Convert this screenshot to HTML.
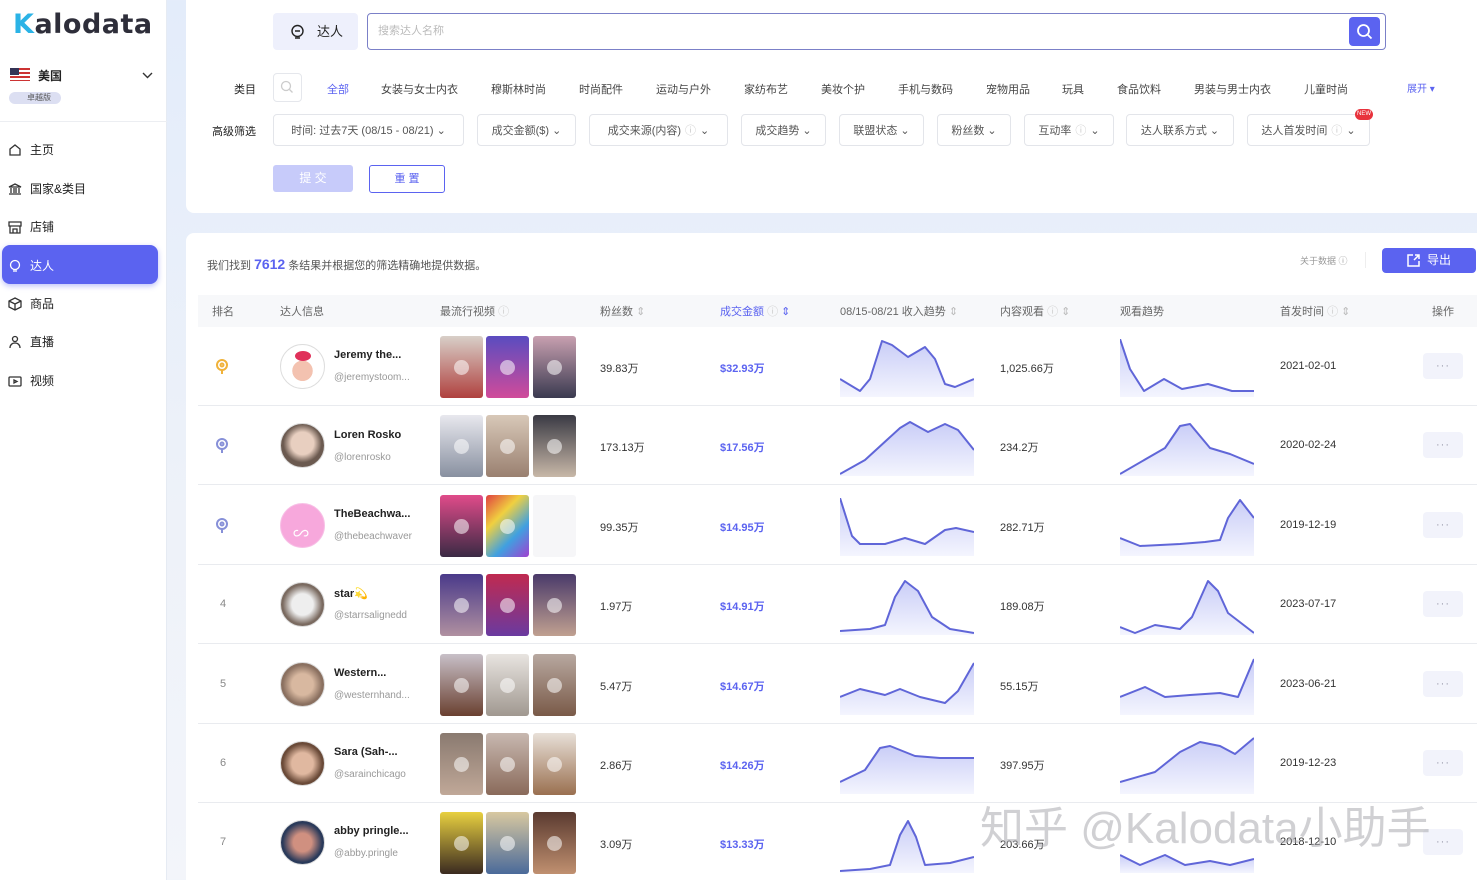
<!DOCTYPE html>
<html><head><meta charset="utf-8">
<style>
*{margin:0;padding:0;box-sizing:border-box}
html,body{width:1477px;height:880px;overflow:hidden}
body{font-family:"Liberation Sans","Noto Sans CJK SC",sans-serif;background:linear-gradient(180deg,#e3ecfa 0%,#eef2f9 60%,#f3f5fa 100%);position:relative;color:#333}
.abs{position:absolute}
.side{position:absolute;left:0;top:0;width:167px;height:880px;background:#fff;border-right:1px solid #e6ebf3}
.nav{position:absolute;left:8px;font-size:12px;color:#222;display:flex;align-items:center;gap:8px}
.nav svg{width:14px;height:14px}
.card{position:absolute;background:#fff;border-radius:8px}
.t{position:absolute;font-size:11px;color:#444;white-space:nowrap}
.dd{position:absolute;top:114px;height:32px;border:1px solid #e3e5ea;border-radius:4px;font-size:11px;color:#555;display:flex;align-items:center;justify-content:center;gap:4px;white-space:nowrap}
.hd{position:absolute;top:303px;font-size:11px;color:#666;white-space:nowrap}
.row{position:absolute;left:198px;width:1279px;height:79px;border-bottom:1px solid #e9ebef}
.c{position:absolute;font-size:11px;color:#333;white-space:nowrap}
.th{position:absolute;width:43px;height:62px;border-radius:3px}
.play{position:absolute;left:14px;top:24px;width:15px;height:15px;border-radius:50%;background:rgba(255,255,255,.55)}
.av{position:absolute;left:82px;width:45px;height:45px;border-radius:50%;border:1px solid #ddd}
.op{position:absolute;left:1225px;width:40px;height:26px;background:#f2f3fb;border-radius:4px;color:#99a;font-size:11px;text-align:center;line-height:26px;letter-spacing:1px}
</style></head><body>
<div class="side">
 <div class="abs" style="left:13px;top:9px;font-size:27px;font-weight:bold;color:#2e2e3a;letter-spacing:0.5px;font-family:'DejaVu Sans',sans-serif"><span style="color:#2bb3e6">K</span>alodata</div>
 <div class="abs" style="left:10px;top:68px;width:20px;height:13px;background:repeating-linear-gradient(180deg,#c33 0 2px,#fff 2px 4px)"><div style="width:9px;height:7px;background:#335"></div></div>
 <div class="abs" style="left:38px;top:67px;font-size:12px;font-weight:bold;color:#222">美国</div>
 <svg class="abs" style="left:142px;top:72px" width="11" height="7" fill="none" stroke="#333" stroke-width="1.4"><path d="M1 1l4.5 4.5L10 1"/></svg>
 <div class="abs" style="left:9px;top:92px;width:52px;height:12px;border-radius:6px;background:#dcdff2;font-size:8px;color:#555;padding-left:18px;line-height:12px">卓越版</div>
 <div class="abs" style="left:0;top:121px;width:167px;height:1px;background:#eceef2"></div>
 <div class="nav" style="top:141px"><svg viewBox="0 0 14 14" fill="none" stroke="#333" stroke-width="1.3"><path d="M2 6 7 2l5 4v6H2z"/></svg>主页</div>
 <div class="nav" style="top:180px"><svg viewBox="0 0 14 14" fill="none" stroke="#333" stroke-width="1.3"><path d="M1 5h12L7 2zM3 6v5M6 6v5M8 6v5M11 6v5M1 12h12"/></svg>国家&amp;类目</div>
 <div class="nav" style="top:218px"><svg viewBox="0 0 14 14" fill="none" stroke="#333" stroke-width="1.3"><path d="M1 2h12v4H1zM2 6v7h10V6M5 13V9h4v4"/></svg>店铺</div>
 <div class="abs" style="left:2px;top:245px;width:156px;height:39px;background:#5b63f0;border-radius:8px;box-shadow:0 2px 6px rgba(91,99,240,.4)"></div>
 <div class="nav" style="top:257px;color:#fff"><svg viewBox="0 0 14 14" fill="none" stroke="#fff" stroke-width="1.3"><circle cx="7" cy="6" r="4.5"/><path d="M5 12h4"/></svg>达人</div>
 <div class="nav" style="top:295px"><svg viewBox="0 0 14 14" fill="none" stroke="#333" stroke-width="1.3"><path d="M7 1 13 4v6l-6 3-6-3V4zM1 4l6 3 6-3M7 7v6"/></svg>商品</div>
 <div class="nav" style="top:333px"><svg viewBox="0 0 14 14" fill="none" stroke="#333" stroke-width="1.3"><circle cx="7" cy="4" r="2.5"/><path d="M2 13c0-3 2-5 5-5s5 2 5 5"/></svg>直播</div>
 <div class="nav" style="top:372px"><svg viewBox="0 0 14 14" fill="none" stroke="#333" stroke-width="1.3"><rect x="1" y="3" width="12" height="9" rx="1"/><path d="M6 6l3 1.5L6 9z"/></svg>视频</div>
</div>

<div class="card" style="left:186px;top:-8px;width:1300px;height:221px"></div>
<div class="abs" style="left:273px;top:13px;width:85px;height:37px;background:#eef0fc;border-radius:4px;font-size:13px;color:#222;line-height:37px;padding-left:44px">达人</div>
<svg class="abs" style="left:290px;top:24px" width="15" height="16" viewBox="0 0 15 16" fill="none" stroke="#222" stroke-width="1.4"><circle cx="7.5" cy="7" r="5.5"/><path d="M5 14h5M5 7h5"/></svg>
<div class="abs" style="left:367px;top:13px;width:1019px;height:37px;border:1px solid #7b80c8;border-radius:4px;font-size:11px;color:#bbb;line-height:35px;padding-left:10px">搜索达人名称</div>
<div class="abs" style="left:1349px;top:17px;width:31px;height:29px;background:#5b63f0;border-radius:4px"></div>
<svg class="abs" style="left:1356px;top:23px" width="17" height="17" viewBox="0 0 17 17" fill="none" stroke="#fff" stroke-width="1.8"><circle cx="7.5" cy="7.5" r="5.5"/><path d="M11.5 11.5l4 4"/></svg>

<div class="t" style="left:234px;top:81px;color:#222">类目</div>
<div class="abs" style="left:273px;top:73px;width:29px;height:29px;border:1px solid #e5e7ec;border-radius:4px"></div>
<svg class="abs" style="left:280px;top:80px" width="14" height="14" fill="none" stroke="#ccc" stroke-width="1.3"><circle cx="6" cy="6" r="4.5"/><path d="M9.5 9.5l3 3"/></svg>
<div class="t" style="left:327px;top:81px;color:#5b63f0">全部</div>
<div class="t" style="left:381px;top:81px">女装与女士内衣</div>
<div class="t" style="left:491px;top:81px">穆斯林时尚</div>
<div class="t" style="left:579px;top:81px">时尚配件</div>
<div class="t" style="left:656px;top:81px">运动与户外</div>
<div class="t" style="left:744px;top:81px">家纺布艺</div>
<div class="t" style="left:821px;top:81px">美妆个护</div>
<div class="t" style="left:898px;top:81px">手机与数码</div>
<div class="t" style="left:986px;top:81px">宠物用品</div>
<div class="t" style="left:1062px;top:81px">玩具</div>
<div class="t" style="left:1117px;top:81px">食品饮料</div>
<div class="t" style="left:1194px;top:81px">男装与男士内衣</div>
<div class="t" style="left:1304px;top:81px">儿童时尚</div>
<div class="t" style="left:1407px;top:80px;color:#5b63f0;font-size:10px">展开 ▾</div>

<div class="t" style="left:212px;top:123px;color:#222">高级筛选</div>
<div class="dd" style="left:273px;width:191px">时间: 过去7天 (08/15 - 08/21) ⌄</div>
<div class="dd" style="left:477px;width:99px">成交金额($) ⌄</div>
<div class="dd" style="left:589px;width:139px">成交来源(内容) <span style="color:#ccc">ⓘ</span> ⌄</div>
<div class="dd" style="left:741px;width:85px">成交趋势 ⌄</div>
<div class="dd" style="left:839px;width:85px">联盟状态 ⌄</div>
<div class="dd" style="left:937px;width:74px">粉丝数 ⌄</div>
<div class="dd" style="left:1024px;width:90px">互动率 <span style="color:#ccc">ⓘ</span> ⌄</div>
<div class="dd" style="left:1126px;width:108px">达人联系方式 ⌄</div>
<div class="dd" style="left:1247px;width:123px">达人首发时间 <span style="color:#ccc">ⓘ</span> ⌄</div>
<div class="abs" style="left:1355px;top:109px;width:18px;height:11px;background:#e8323c;border-radius:6px;font-size:6px;color:#fff;text-align:center;line-height:11px">NEW</div>
<div class="abs" style="left:273px;top:165px;width:80px;height:27px;background:#c7cbfa;border-radius:3px;color:#fff;font-size:12px;text-align:center;line-height:27px">提 交</div>
<div class="abs" style="left:369px;top:165px;width:76px;height:28px;border:1px solid #5b63f0;border-radius:3px;color:#5b63f0;font-size:11px;text-align:center;line-height:26px">重 置</div>

<div class="card" style="left:186px;top:233px;width:1300px;height:660px"></div>
<div class="t" style="left:207px;top:256px;color:#555">我们找到 <span style="font-size:14px;font-weight:bold;color:#5b63f0">7612</span> 条结果并根据您的筛选精确地提供数据。</div>
<div class="t" style="left:1300px;top:254px;font-size:9px;color:#999">关于数据 ⓘ</div>
<div class="abs" style="left:1365px;top:252px;width:1px;height:16px;background:#eee"></div>
<div class="abs" style="left:1382px;top:248px;width:94px;height:25px;background:#5b63f0;border-radius:4px;color:#fff;font-size:12px;line-height:25px;padding-left:45px">导出</div>
<svg class="abs" style="left:1406px;top:253px" width="15" height="15" fill="none" stroke="#fff" stroke-width="1.5"><path d="M7 2H2v11h11V8M8 7l5-5M9 2h4v4"/></svg>

<div class="abs" style="left:198px;top:295px;width:1279px;height:32px;background:#f7f8fa"></div>
<div class="hd" style="left:212px">排名</div>
<div class="hd" style="left:280px">达人信息</div>
<div class="hd" style="left:440px">最流行视频 <span style="color:#ccc">ⓘ</span></div>
<div class="hd" style="left:600px">粉丝数 <span style="color:#bbb">⇕</span></div>
<div class="hd" style="left:720px;color:#5b63f0">成交金额 <span style="color:#ccc">ⓘ</span> <span>⇕</span></div>
<div class="hd" style="left:840px">08/15-08/21 收入趋势 <span style="color:#bbb">⇕</span></div>
<div class="hd" style="left:1000px">内容观看 <span style="color:#ccc">ⓘ</span> <span style="color:#bbb">⇕</span></div>
<div class="hd" style="left:1120px">观看趋势</div>
<div class="hd" style="left:1280px">首发时间 <span style="color:#ccc">ⓘ</span> <span style="color:#bbb">⇕</span></div>
<div class="hd" style="left:1432px">操作</div>

<svg width="0" height="0" style="position:absolute"><defs><linearGradient id="g" x1="0" y1="0" x2="0" y2="1"><stop offset="0" stop-color="#c9cdf7"/><stop offset="1" stop-color="#f4f5fe"/></linearGradient></defs></svg>

<div class="row" style="top:327px">
 <svg class="abs" style="left:17px;top:31px" width="14" height="17" fill="none" stroke="#f0b23a" stroke-width="2"><circle cx="7" cy="7" r="5"/><circle cx="7" cy="7" r="1.5"/><path d="M7 12v4"/></svg>
 <div class="av" style="top:17px;background:radial-gradient(circle at 50% 60%,#f3c2b0 0 30%,#fff 31%);"><div style="position:absolute;left:14px;top:6px;width:16px;height:10px;border-radius:50%;background:#e0315a"></div></div>
 <div class="c" style="left:136px;top:22px;font-weight:bold;color:#222">Jeremy the...</div>
 <div class="c" style="left:136px;top:45px;font-size:10px;color:#999">@jeremystoom...</div>
 <div class="th" style="left:242px;top:9px;background:linear-gradient(#d8cfc8,#b0413f)"><div class="play"></div></div>
 <div class="th" style="left:288px;top:9px;background:linear-gradient(#5a4cc0,#d14b9a)"><div class="play"></div></div>
 <div class="th" style="left:335px;top:9px;background:linear-gradient(#c8a0b0,#3a3a50)"><div class="play"></div></div>
 <div class="c" style="left:402px;top:33px">39.83万</div>
 <div class="c" style="left:522px;top:33px;color:#5b63f0;font-weight:bold">$32.93万</div>
 <svg class="abs" style="left:642px;top:12px" width="134" height="58"><polygon fill="url(#g)" points="0,40 20,52 30,40 42,2 52,6 68,18 85,8 95,20 105,45 115,48 134,40 134,58 0,58"/><polyline fill="none" stroke="#6066d8" stroke-width="2" stroke-linejoin="round" points="0,40 20,52 30,40 42,2 52,6 68,18 85,8 95,20 105,45 115,48 134,40"/></svg>
 <div class="c" style="left:802px;top:33px">1,025.66万</div>
 <svg class="abs" style="left:922px;top:12px" width="134" height="58"><polygon fill="url(#g)" points="0,0 10,30 24,52 44,40 62,50 88,45 112,52 134,52 134,58 0,58"/><polyline fill="none" stroke="#6066d8" stroke-width="2" stroke-linejoin="round" points="0,0 10,30 24,52 44,40 62,50 88,45 112,52 134,52"/></svg>
 <div class="c" style="left:1082px;top:33px">2021-02-01</div>
 <div class="op" style="top:26px">···</div>
</div>
<div class="row" style="top:406px">
 <svg class="abs" style="left:17px;top:31px" width="14" height="17" fill="none" stroke="#8790d8" stroke-width="2"><circle cx="7" cy="7" r="5"/><circle cx="7" cy="7" r="1.5"/><path d="M7 12v4"/></svg>
 <div class="av" style="top:17px;background:radial-gradient(circle at 50% 45%,#e8cfc0 0 35%,#6b5a50 60%)"></div>
 <div class="c" style="left:136px;top:23px;font-weight:bold;color:#222">Loren Rosko</div>
 <div class="c" style="left:136px;top:46px;font-size:10px;color:#999">@lorenrosko</div>
 <div class="th" style="left:242px;top:9px;background:linear-gradient(#e8e8ee,#8890a0)"><div class="play"></div></div>
 <div class="th" style="left:288px;top:9px;background:linear-gradient(#d8c8b8,#9a8070)"><div class="play"></div></div>
 <div class="th" style="left:335px;top:9px;background:linear-gradient(#3a3a44,#c8b8a8)"><div class="play"></div></div>
 <div class="c" style="left:402px;top:33px">173.13万</div>
 <div class="c" style="left:522px;top:33px;color:#5b63f0;font-weight:bold">$17.56万</div>
 <svg class="abs" style="left:642px;top:12px" width="134" height="58"><polygon fill="url(#g)" points="0,56 25,42 60,10 70,4 88,14 105,6 118,12 134,32 134,58 0,58"/><polyline fill="none" stroke="#6066d8" stroke-width="2" stroke-linejoin="round" points="0,56 25,42 60,10 70,4 88,14 105,6 118,12 134,32"/></svg>
 <div class="c" style="left:802px;top:33px">234.2万</div>
 <svg class="abs" style="left:922px;top:12px" width="134" height="58"><polygon fill="url(#g)" points="0,56 45,30 60,8 70,6 90,30 110,36 134,46 134,58 0,58"/><polyline fill="none" stroke="#6066d8" stroke-width="2" stroke-linejoin="round" points="0,56 45,30 60,8 70,6 90,30 110,36 134,46"/></svg>
 <div class="c" style="left:1082px;top:33px">2020-02-24</div>
 <div class="op" style="top:26px">···</div>
</div>
<div class="row" style="top:486px">
 <svg class="abs" style="left:17px;top:31px" width="14" height="17" fill="none" stroke="#8790d8" stroke-width="2"><circle cx="7" cy="7" r="5"/><circle cx="7" cy="7" r="1.5"/><path d="M7 12v4"/></svg>
 <div class="av" style="top:17px;background:#f7a8dc;border-color:#f7c0e6"><div style="position:absolute;left:12px;top:16px;color:#fff;font-size:16px">∽</div></div>
 <div class="c" style="left:136px;top:22px;font-weight:bold;color:#222">TheBeachwa...</div>
 <div class="c" style="left:136px;top:45px;font-size:10px;color:#999">@thebeachwaver</div>
 <div class="th" style="left:242px;top:9px;background:linear-gradient(#e04b8a,#3a2a44)"><div class="play"></div></div>
 <div class="th" style="left:288px;top:9px;background:linear-gradient(135deg,#e04040,#f0d040,#40a0e0,#a040d0)"><div class="play"></div></div>
 <div class="th" style="left:335px;top:9px;background:#f6f6f8"></div>
 <div class="c" style="left:402px;top:33px">99.35万</div>
 <div class="c" style="left:522px;top:33px;color:#5b63f0;font-weight:bold">$14.95万</div>
 <svg class="abs" style="left:642px;top:12px" width="134" height="58"><polygon fill="url(#g)" points="0,0 12,38 20,46 45,46 65,40 85,46 105,32 116,30 134,34 134,58 0,58"/><polyline fill="none" stroke="#6066d8" stroke-width="2" stroke-linejoin="round" points="0,0 12,38 20,46 45,46 65,40 85,46 105,32 116,30 134,34"/></svg>
 <div class="c" style="left:802px;top:33px">282.71万</div>
 <svg class="abs" style="left:922px;top:12px" width="134" height="58"><polygon fill="url(#g)" points="0,40 20,48 60,46 85,44 100,42 108,20 120,2 134,20 134,58 0,58"/><polyline fill="none" stroke="#6066d8" stroke-width="2" stroke-linejoin="round" points="0,40 20,48 60,46 85,44 100,42 108,20 120,2 134,20"/></svg>
 <div class="c" style="left:1082px;top:33px">2019-12-19</div>
 <div class="op" style="top:26px">···</div>
</div>
<div class="row" style="top:565px">
 <div class="c" style="left:22px;top:33px;color:#888">4</div>
 <div class="av" style="top:17px;background:radial-gradient(circle at 50% 50%,#eee 0 35%,#7a6a60 65%)"></div>
 <div class="c" style="left:136px;top:22px;font-weight:bold;color:#222">star💫</div>
 <div class="c" style="left:136px;top:45px;font-size:10px;color:#999">@starrsalignedd</div>
 <div class="th" style="left:242px;top:9px;background:linear-gradient(#4a3a8a,#b090a0)"><div class="play"></div></div>
 <div class="th" style="left:288px;top:9px;background:linear-gradient(#c02a50,#6a3aa0)"><div class="play"></div></div>
 <div class="th" style="left:335px;top:9px;background:linear-gradient(#4a3a6a,#c0a090)"><div class="play"></div></div>
 <div class="c" style="left:402px;top:33px">1.97万</div>
 <div class="c" style="left:522px;top:33px;color:#5b63f0;font-weight:bold">$14.91万</div>
 <svg class="abs" style="left:642px;top:12px" width="134" height="58"><polygon fill="url(#g)" points="0,54 30,52 45,48 55,20 65,4 78,14 92,40 110,52 134,56 134,58 0,58"/><polyline fill="none" stroke="#6066d8" stroke-width="2" stroke-linejoin="round" points="0,54 30,52 45,48 55,20 65,4 78,14 92,40 110,52 134,56"/></svg>
 <div class="c" style="left:802px;top:33px">189.08万</div>
 <svg class="abs" style="left:922px;top:12px" width="134" height="58"><polygon fill="url(#g)" points="0,50 15,56 35,48 60,52 72,40 88,4 98,14 108,36 134,56 134,58 0,58"/><polyline fill="none" stroke="#6066d8" stroke-width="2" stroke-linejoin="round" points="0,50 15,56 35,48 60,52 72,40 88,4 98,14 108,36 134,56"/></svg>
 <div class="c" style="left:1082px;top:33px">2023-07-17</div>
 <div class="op" style="top:26px">···</div>
</div>
<div class="row" style="top:645px">
 <div class="c" style="left:22px;top:33px;color:#888">5</div>
 <div class="av" style="top:17px;background:radial-gradient(circle at 50% 50%,#d8b8a0 0 35%,#8a7060 65%)"></div>
 <div class="c" style="left:136px;top:22px;font-weight:bold;color:#222">Western...</div>
 <div class="c" style="left:136px;top:45px;font-size:10px;color:#999">@westernhand...</div>
 <div class="th" style="left:242px;top:9px;background:linear-gradient(#c8c0c8,#6a4030)"><div class="play"></div></div>
 <div class="th" style="left:288px;top:9px;background:linear-gradient(#e8e4e0,#a09890)"><div class="play"></div></div>
 <div class="th" style="left:335px;top:9px;background:linear-gradient(#b8a8a0,#7a5a48)"><div class="play"></div></div>
 <div class="c" style="left:402px;top:33px">5.47万</div>
 <div class="c" style="left:522px;top:33px;color:#5b63f0;font-weight:bold">$14.67万</div>
 <svg class="abs" style="left:642px;top:12px" width="134" height="58"><polygon fill="url(#g)" points="0,40 20,32 45,38 60,32 80,40 105,46 118,34 134,6 134,58 0,58"/><polyline fill="none" stroke="#6066d8" stroke-width="2" stroke-linejoin="round" points="0,40 20,32 45,38 60,32 80,40 105,46 118,34 134,6"/></svg>
 <div class="c" style="left:802px;top:33px">55.15万</div>
 <svg class="abs" style="left:922px;top:12px" width="134" height="58"><polygon fill="url(#g)" points="0,40 25,30 45,40 70,38 100,36 118,40 134,2 134,58 0,58"/><polyline fill="none" stroke="#6066d8" stroke-width="2" stroke-linejoin="round" points="0,40 25,30 45,40 70,38 100,36 118,40 134,2"/></svg>
 <div class="c" style="left:1082px;top:33px">2023-06-21</div>
 <div class="op" style="top:26px">···</div>
</div>
<div class="row" style="top:724px">
 <div class="c" style="left:22px;top:33px;color:#888">6</div>
 <div class="av" style="top:17px;background:radial-gradient(circle at 50% 50%,#e0b8a0 0 35%,#6a4a38 65%)"></div>
 <div class="c" style="left:136px;top:22px;font-weight:bold;color:#222">Sara (Sah-...</div>
 <div class="c" style="left:136px;top:45px;font-size:10px;color:#999">@sarainchicago</div>
 <div class="th" style="left:242px;top:9px;background:linear-gradient(#8a7a70,#c0a898)"><div class="play"></div></div>
 <div class="th" style="left:288px;top:9px;background:linear-gradient(#c8b8b0,#8a6a5a)"><div class="play"></div></div>
 <div class="th" style="left:335px;top:9px;background:linear-gradient(#e8e0d8,#9a7050)"><div class="play"></div></div>
 <div class="c" style="left:402px;top:33px">2.86万</div>
 <div class="c" style="left:522px;top:33px;color:#5b63f0;font-weight:bold">$14.26万</div>
 <svg class="abs" style="left:642px;top:12px" width="134" height="58"><polygon fill="url(#g)" points="0,46 25,34 40,12 50,10 75,20 100,22 134,22 134,58 0,58"/><polyline fill="none" stroke="#6066d8" stroke-width="2" stroke-linejoin="round" points="0,46 25,34 40,12 50,10 75,20 100,22 134,22"/></svg>
 <div class="c" style="left:802px;top:33px">397.95万</div>
 <svg class="abs" style="left:922px;top:12px" width="134" height="58"><polygon fill="url(#g)" points="0,46 35,36 60,16 80,6 100,10 115,18 134,2 134,58 0,58"/><polyline fill="none" stroke="#6066d8" stroke-width="2" stroke-linejoin="round" points="0,46 35,36 60,16 80,6 100,10 115,18 134,2"/></svg>
 <div class="c" style="left:1082px;top:33px">2019-12-23</div>
 <div class="op" style="top:26px">···</div>
</div>
<div class="row" style="top:803px">
 <div class="c" style="left:22px;top:33px;color:#888">7</div>
 <div class="av" style="top:17px;background:radial-gradient(circle at 50% 50%,#d09080 0 30%,#2a3a5a 65%)"></div>
 <div class="c" style="left:136px;top:22px;font-weight:bold;color:#222">abby pringle...</div>
 <div class="c" style="left:136px;top:45px;font-size:10px;color:#999">@abby.pringle</div>
 <div class="th" style="left:242px;top:9px;background:linear-gradient(#e8d040,#3a2a20)"><div class="play"></div></div>
 <div class="th" style="left:288px;top:9px;background:linear-gradient(#d8c8a0,#4a6a9a)"><div class="play"></div></div>
 <div class="th" style="left:335px;top:9px;background:linear-gradient(#5a3a30,#c09070)"><div class="play"></div></div>
 <div class="c" style="left:402px;top:33px">3.09万</div>
 <div class="c" style="left:522px;top:33px;color:#5b63f0;font-weight:bold">$13.33万</div>
 <svg class="abs" style="left:642px;top:12px" width="134" height="58"><polygon fill="url(#g)" points="0,56 30,54 50,50 60,20 68,6 76,22 85,50 110,48 134,42 134,58 0,58"/><polyline fill="none" stroke="#6066d8" stroke-width="2" stroke-linejoin="round" points="0,56 30,54 50,50 60,20 68,6 76,22 85,50 110,48 134,42"/></svg>
 <div class="c" style="left:802px;top:33px">203.66万</div>
 <svg class="abs" style="left:922px;top:12px" width="134" height="58"><polygon fill="url(#g)" points="0,40 20,50 45,40 65,50 90,46 110,50 134,44 134,58 0,58"/><polyline fill="none" stroke="#6066d8" stroke-width="2" stroke-linejoin="round" points="0,40 20,50 45,40 65,50 90,46 110,50 134,44"/></svg>
 <div class="c" style="left:1082px;top:33px">2018-12-10</div>
 <div class="op" style="top:26px">···</div>
</div>

<div class="abs" style="left:980px;top:792px;font-size:44px;color:rgba(170,170,175,.55);white-space:nowrap;font-family:'Liberation Sans','Noto Sans CJK SC',sans-serif">知乎 @Kalodata小助手</div>
</body></html>
